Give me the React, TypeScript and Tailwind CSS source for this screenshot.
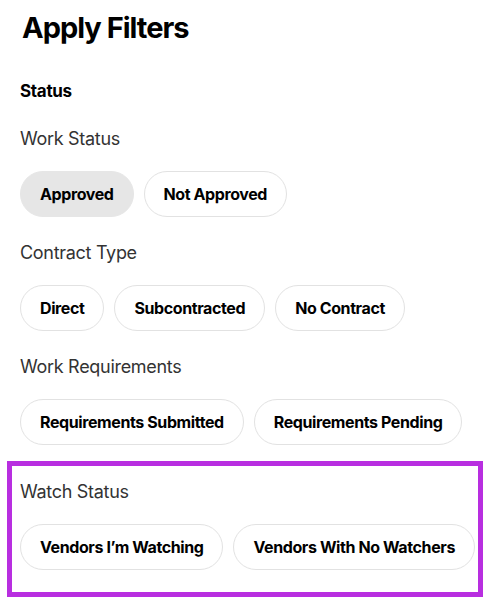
import { useState } from 'react'

const GROUPS = [
  { label: 'Work Status', options: ['Approved', 'Not Approved'] },
  { label: 'Contract Type', options: ['Direct', 'Subcontracted', 'No Contract'] },
  { label: 'Work Requirements', options: ['Requirements Submitted', 'Requirements Pending'] },
]

const WATCH = { label: 'Watch Status', options: ['Vendors I’m Watching', 'Vendors With No Watchers'] }

function Chip({ text, active, onClick }: { text: string; active: boolean; onClick: () => void }) {
  return (
    <button
      type="button"
      onClick={onClick}
      className={`shrink-0 h-[46px] px-[19px] rounded-full text-[16px] font-bold tracking-[-0.4px] whitespace-nowrap text-black border ${
        active ? 'bg-[#e6e6e6] border-[#e6e6e6]' : 'bg-white border-[#e2e2e2]'
      }`}
    >
      {text}
    </button>
  )
}

function Group({
  label,
  options,
  selected,
  toggle,
}: {
  label: string
  options: string[]
  selected: string[]
  toggle: (o: string) => void
}) {
  return (
    <div>
      <p className="text-[18px] leading-[24px] text-[#333] tracking-[-0.3px]">{label}</p>
      <div className="flex gap-[10px] mt-[20px]">
        {options.map((o) => (
          <Chip key={o} text={o} active={selected.includes(o)} onClick={() => toggle(o)} />
        ))}
      </div>
    </div>
  )
}

export default function App() {
  const [selected, setSelected] = useState<string[]>(['Approved'])
  const toggle = (o: string) =>
    setSelected((s) => (s.includes(o) ? s.filter((x) => x !== o) : [...s, o]))

  return (
    <div
      className="w-[502px] h-[604px] bg-white px-[7px] pt-[10px]"
      style={{ fontFamily: 'Inter, "Liberation Sans", sans-serif' }}
    >
      <div className="px-[13px]">
        <h1 className="text-[29px] leading-[36px] font-bold tracking-[-1px] text-black pl-[2px]">
          Apply Filters
        </h1>
        <h2 className="mt-[34px] text-[17px] leading-[22px] font-bold tracking-[-0.3px] text-black">Status</h2>
        <div className="mt-[25px] flex flex-col gap-[24px]">
          {GROUPS.map((g) => (
            <Group key={g.label} label={g.label} options={g.options} selected={selected} toggle={toggle} />
          ))}
        </div>
      </div>

      {/* highlighted section */}
      <div className="mt-[16px] w-[476px] border-[5px] border-[#b82ee0] pl-[8px] pr-[4px] pt-[14px] pb-[22px]">
        <Group label={WATCH.label} options={WATCH.options} selected={selected} toggle={toggle} />
      </div>
    </div>
  )
}
